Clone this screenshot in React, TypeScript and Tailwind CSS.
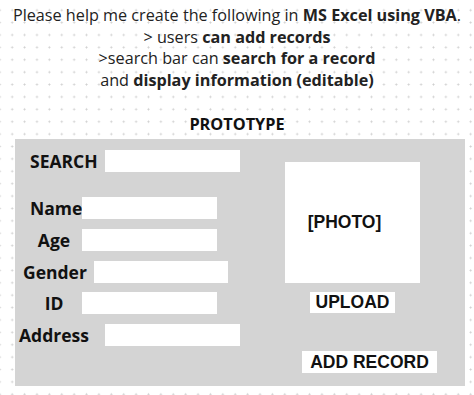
export default function App() {
  return (
    <div className="w-[474px] h-[395px] overflow-hidden bg-white bg-[radial-gradient(circle,#cfcfcf_0.8px,transparent_1.2px)] bg-[size:12.4px_12.4px] bg-[position:6px_4px]">
      {/* question text */}
      <div className="pt-[5px] text-center text-[16.2px] leading-[21.7px] text-[#222] font-['Open_Sans',sans-serif]">
        <p>Please help me create the following in <b>MS Excel using VBA</b>.</p>
        <p>&gt; users <b>can add records</b></p>
        <p>&gt;search bar can <b>search for a record</b></p>
        <p>and <b>display information (editable)</b></p>
      </div>

      <p className="mt-[23px] text-center text-[16.3px] leading-[18px] font-bold text-[#111] font-['Open_Sans',sans-serif]">PROTOTYPE</p>

      {/* prototype panel */}
      <div className="ml-[15px] mt-[6px] flex w-[450px] h-[247px] bg-[#d4d4d4] font-['Open_Sans',sans-serif] font-bold text-[17.5px] text-[#111]">
        <div className="flex flex-col pt-[11px] w-[240px]">
          <Row pl="pl-[15px]" lw="w-[75px]" iw="w-[135px]" label="SEARCH" />
          <div className="h-[24px]" />
          <Row pl="pl-[15px]" lw="w-[52px]" iw="w-[135px]" label="Name" />
          <div className="h-[9px]" />
          <Row pl="pl-[15px]" lw="w-[52px]" iw="w-[135px]" label="Age" center />
          <div className="h-[9px]" />
          <Row pl="pl-[8px]" lw="w-[71px]" iw="w-[134px]" label="Gender" />
          <div className="h-[8px]" />
          <Row pl="pl-[15px]" lw="w-[52px]" iw="w-[135px]" label="ID" center />
          <div className="h-[9px]" />
          <Row pl="pl-[4px]" lw="w-[86px]" iw="w-[135px]" label="Address" />
        </div>

        <div className="flex flex-col items-start pl-[30px] pt-[23px]">
          <div className="w-[135px] h-[121px] bg-white flex items-center justify-center pr-[16px] font-['Liberation_Sans',sans-serif] text-[17.5px]">
            [PHOTO]
          </div>
          <div className="ml-[25px] mt-[9px] w-[85px] h-[21px] bg-white flex items-center justify-center font-['Liberation_Sans',sans-serif] text-[17.5px]">
            UPLOAD
          </div>
          <div className="ml-[17px] mt-[38px] w-[135px] h-[22px] bg-white flex items-center justify-center font-['Liberation_Sans',sans-serif] text-[17.5px]">
            ADD RECORD
          </div>
        </div>
      </div>
    </div>
  );
}

function Row({
  pl,
  lw,
  iw,
  label,
  center,
}: {
  pl: string;
  lw: string;
  iw: string;
  label: string;
  center?: boolean;
}) {
  return (
    <div className={`flex items-center h-[23px] ${pl}`}>
      <span className={`${lw} ${center ? "text-center pr-[4px]" : ""} whitespace-nowrap`}>{label}</span>
      <div className={`${iw} h-[22px] bg-white`} />
    </div>
  );
}
